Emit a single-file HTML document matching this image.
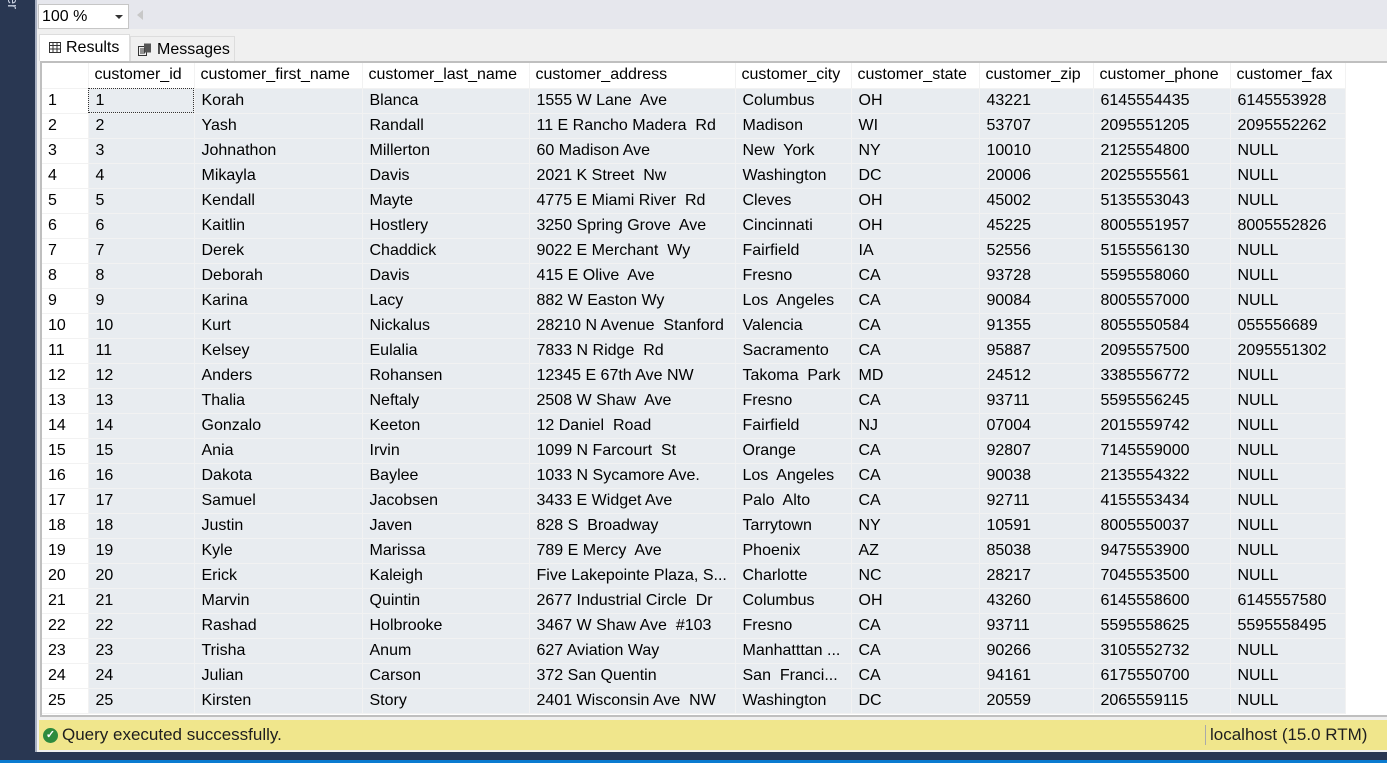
<!DOCTYPE html>
<html><head><meta charset="utf-8"><style>
*{margin:0;padding:0;box-sizing:border-box}
body{width:1387px;height:763px;overflow:hidden;background:#293752;font-family:"Liberation Sans",Arial,sans-serif;position:relative}
#side{position:absolute;left:0;top:0;width:35px;height:763px;background:#293752;color:#c8d0e0;font-size:16px}
#main{position:absolute;left:35px;top:0;width:1352px;height:752px;background:#f0f0f0;border-left:2px solid #a9b1c2}
#top{position:absolute;left:0;top:0;width:1352px;height:29px;background:#e6e7ed}
#zoom{position:absolute;left:1px;top:4px;width:91px;height:25px;background:#fff;border:1px solid #c6c6c6;font-size:16px;line-height:23px;padding-left:3px;color:#000}
#zoom:after{content:"";position:absolute;right:5px;top:10px;border:4px solid transparent;border-top:4px solid #333}
#arr{position:absolute;left:100px;top:10px;border:5px solid transparent;border-right:6px solid #c8c8c8;border-left:0}
.tab{position:absolute;top:34px;height:27px;font-size:16px;line-height:25px;color:#000}
#t1{left:2px;width:91px;background:#fff;border:1px solid #ddd;border-bottom:none;padding-left:26px}
#t2{left:93px;width:105px;background:#f0f0f0;border:1px solid #ddd;border-bottom:none;padding-left:26px;top:36px}
#grid{position:absolute;left:3px;top:61px;width:1349px;height:656px;background:#fff;border:2px solid #bfbfbf;border-right:none;overflow:hidden}
table{border-collapse:collapse;table-layout:fixed;font-size:16px;color:#000}
td{height:25px;white-space:pre;overflow:hidden;text-overflow:clip;padding-left:7px;border-right:1px solid #f2f2f2;border-bottom:1px solid #f2f2f2;background:#e8ecf0;line-height:24px}
tr.h td{background:#fff;padding-left:6px}
td.n{background:#fff;padding-left:6px}
td.f{outline:1px dotted #333;outline-offset:-1px}
#status{position:absolute;left:2px;top:720px;width:1350px;height:30px;background:#f0e68c;font-size:17px;line-height:30px;color:#1e1e1e}
#ok{position:absolute;left:4px;top:8px;width:15px;height:15px;border-radius:50%;background:#2e8b3e;color:#fff;font-size:11px;line-height:15px;text-align:center;font-weight:bold}
#sep{position:absolute;left:1166px;top:5px;width:1px;height:20px;background:#aaa}
#blue{position:absolute;left:0;top:760px;width:1387px;height:3px;background:#0b7bd0}
</style></head><body>
<div id="side"><div style="position:absolute;left:6px;top:-6px;transform:rotate(90deg);font-size:15px">er</div></div>
<div id="main">
<div id="top"><div id="zoom">100 %</div><div id="arr"></div></div>
<div class="tab" id="t1"><svg style="position:absolute;left:9px;top:7px" width="12" height="11"><rect x="0.5" y="0.5" width="11" height="10" fill="none" stroke="#333"/><path d="M0 3.5H12M0 7H12M4 0V11M8 0V11" stroke="#333"/></svg>Results</div>
<div class="tab" id="t2"><svg style="position:absolute;left:7px;top:6px" width="14" height="13"><rect x="0.5" y="3.5" width="8" height="9" fill="none" stroke="#333"/><rect x="6" y="0.5" width="7" height="9" fill="#555"/><path d="M2 6H7M2 8H7M2 10H7" stroke="#333"/></svg>Messages</div>
<div id="grid"><table>
<colgroup><col style="width:46px"><col style="width:106px"><col style="width:168px"><col style="width:167px"><col style="width:206px"><col style="width:116px"><col style="width:128px"><col style="width:114px"><col style="width:137px"><col style="width:115px"></colgroup>
<tr class="h"><td></td><td>customer_id</td><td>customer_first_name</td><td>customer_last_name</td><td>customer_address</td><td>customer_city</td><td>customer_state</td><td>customer_zip</td><td>customer_phone</td><td>customer_fax</td></tr>
<tr><td class="n">1</td><td class="f">1</td><td>Korah</td><td>Blanca</td><td>1555 W Lane  Ave</td><td>Columbus</td><td>OH</td><td>43221</td><td>6145554435</td><td>6145553928</td></tr>
<tr><td class="n">2</td><td>2</td><td>Yash</td><td>Randall</td><td>11 E Rancho Madera  Rd</td><td>Madison</td><td>WI</td><td>53707</td><td>2095551205</td><td>2095552262</td></tr>
<tr><td class="n">3</td><td>3</td><td>Johnathon</td><td>Millerton</td><td>60 Madison Ave</td><td>New  York</td><td>NY</td><td>10010</td><td>2125554800</td><td>NULL</td></tr>
<tr><td class="n">4</td><td>4</td><td>Mikayla</td><td>Davis</td><td>2021 K Street  Nw</td><td>Washington</td><td>DC</td><td>20006</td><td>2025555561</td><td>NULL</td></tr>
<tr><td class="n">5</td><td>5</td><td>Kendall</td><td>Mayte</td><td>4775 E Miami River  Rd</td><td>Cleves</td><td>OH</td><td>45002</td><td>5135553043</td><td>NULL</td></tr>
<tr><td class="n">6</td><td>6</td><td>Kaitlin</td><td>Hostlery</td><td>3250 Spring Grove  Ave</td><td>Cincinnati</td><td>OH</td><td>45225</td><td>8005551957</td><td>8005552826</td></tr>
<tr><td class="n">7</td><td>7</td><td>Derek</td><td>Chaddick</td><td>9022 E Merchant  Wy</td><td>Fairfield</td><td>IA</td><td>52556</td><td>5155556130</td><td>NULL</td></tr>
<tr><td class="n">8</td><td>8</td><td>Deborah</td><td>Davis</td><td>415 E Olive  Ave</td><td>Fresno</td><td>CA</td><td>93728</td><td>5595558060</td><td>NULL</td></tr>
<tr><td class="n">9</td><td>9</td><td>Karina</td><td>Lacy</td><td>882 W Easton Wy</td><td>Los  Angeles</td><td>CA</td><td>90084</td><td>8005557000</td><td>NULL</td></tr>
<tr><td class="n">10</td><td>10</td><td>Kurt</td><td>Nickalus</td><td>28210 N Avenue  Stanford</td><td>Valencia</td><td>CA</td><td>91355</td><td>8055550584</td><td>055556689</td></tr>
<tr><td class="n">11</td><td>11</td><td>Kelsey</td><td>Eulalia</td><td>7833 N Ridge  Rd</td><td>Sacramento</td><td>CA</td><td>95887</td><td>2095557500</td><td>2095551302</td></tr>
<tr><td class="n">12</td><td>12</td><td>Anders</td><td>Rohansen</td><td>12345 E 67th Ave NW</td><td>Takoma  Park</td><td>MD</td><td>24512</td><td>3385556772</td><td>NULL</td></tr>
<tr><td class="n">13</td><td>13</td><td>Thalia</td><td>Neftaly</td><td>2508 W Shaw  Ave</td><td>Fresno</td><td>CA</td><td>93711</td><td>5595556245</td><td>NULL</td></tr>
<tr><td class="n">14</td><td>14</td><td>Gonzalo</td><td>Keeton</td><td>12 Daniel  Road</td><td>Fairfield</td><td>NJ</td><td>07004</td><td>2015559742</td><td>NULL</td></tr>
<tr><td class="n">15</td><td>15</td><td>Ania</td><td>Irvin</td><td>1099 N Farcourt  St</td><td>Orange</td><td>CA</td><td>92807</td><td>7145559000</td><td>NULL</td></tr>
<tr><td class="n">16</td><td>16</td><td>Dakota</td><td>Baylee</td><td>1033 N Sycamore Ave.</td><td>Los  Angeles</td><td>CA</td><td>90038</td><td>2135554322</td><td>NULL</td></tr>
<tr><td class="n">17</td><td>17</td><td>Samuel</td><td>Jacobsen</td><td>3433 E Widget Ave</td><td>Palo  Alto</td><td>CA</td><td>92711</td><td>4155553434</td><td>NULL</td></tr>
<tr><td class="n">18</td><td>18</td><td>Justin</td><td>Javen</td><td>828 S  Broadway</td><td>Tarrytown</td><td>NY</td><td>10591</td><td>8005550037</td><td>NULL</td></tr>
<tr><td class="n">19</td><td>19</td><td>Kyle</td><td>Marissa</td><td>789 E Mercy  Ave</td><td>Phoenix</td><td>AZ</td><td>85038</td><td>9475553900</td><td>NULL</td></tr>
<tr><td class="n">20</td><td>20</td><td>Erick</td><td>Kaleigh</td><td>Five Lakepointe Plaza, S...</td><td>Charlotte</td><td>NC</td><td>28217</td><td>7045553500</td><td>NULL</td></tr>
<tr><td class="n">21</td><td>21</td><td>Marvin</td><td>Quintin</td><td>2677 Industrial Circle  Dr</td><td>Columbus</td><td>OH</td><td>43260</td><td>6145558600</td><td>6145557580</td></tr>
<tr><td class="n">22</td><td>22</td><td>Rashad</td><td>Holbrooke</td><td>3467 W Shaw Ave  #103</td><td>Fresno</td><td>CA</td><td>93711</td><td>5595558625</td><td>5595558495</td></tr>
<tr><td class="n">23</td><td>23</td><td>Trisha</td><td>Anum</td><td>627 Aviation Way</td><td>Manhatttan ...</td><td>CA</td><td>90266</td><td>3105552732</td><td>NULL</td></tr>
<tr><td class="n">24</td><td>24</td><td>Julian</td><td>Carson</td><td>372 San Quentin</td><td>San  Franci...</td><td>CA</td><td>94161</td><td>6175550700</td><td>NULL</td></tr>
<tr><td class="n">25</td><td>25</td><td>Kirsten</td><td>Story</td><td>2401 Wisconsin Ave  NW</td><td>Washington</td><td>DC</td><td>20559</td><td>2065559115</td><td>NULL</td></tr>
</table></div>
<div id="status"><div id="ok">✓</div><span style="position:absolute;left:23px">Query executed successfully.</span><div id="sep"></div><span style="position:absolute;left:1171px">localhost (15.0 RTM)</span></div>
</div>
<div id="blue"></div>
</body></html>
